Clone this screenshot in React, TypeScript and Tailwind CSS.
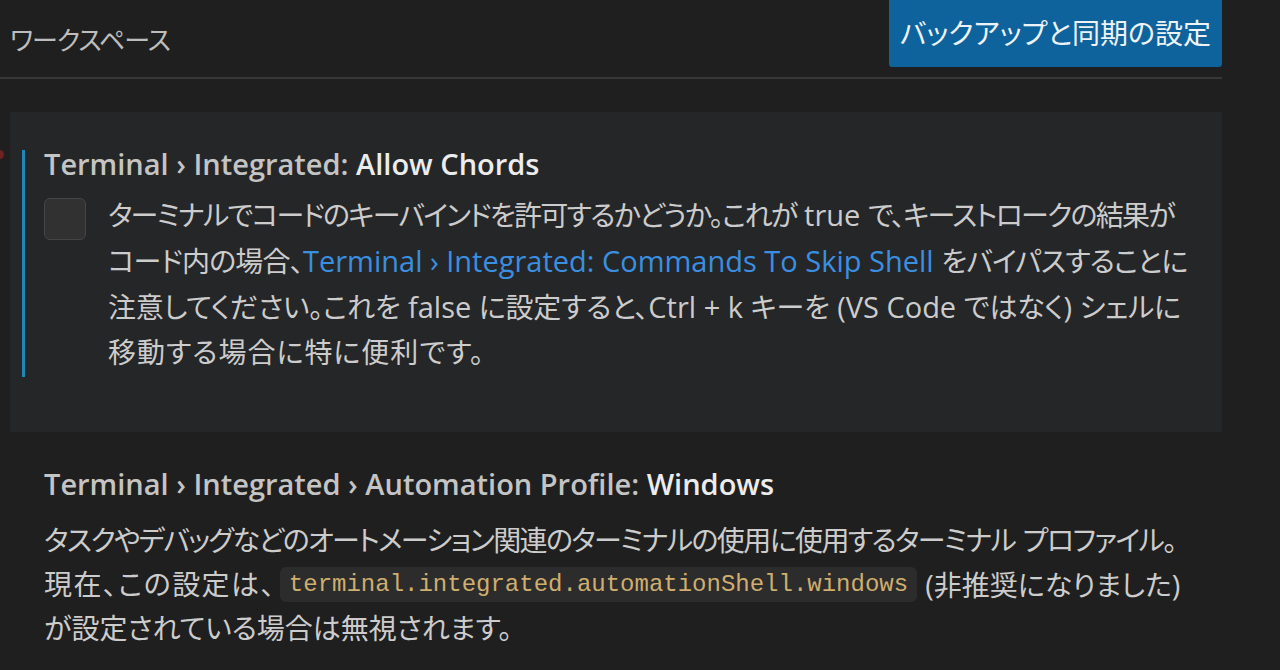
const jp = "font-['Segoe_UI','Open_Sans','Noto_Sans_CJK_JP',sans-serif] [font-feature-settings:'palt']";

function L({ children }: { children: React.ReactNode }) {
  // latin runs are a touch bigger than the CJK text in the original
  return <span className="text-[29px] tracking-normal">{children}</span>;
}

export default function App() {
  return (
    <div className={`w-[1280px] h-[670px] overflow-hidden bg-[#1f1f1f] text-[#cccccc] ${jp}`}>
      <div className="w-[1222px] h-[79px] flex items-start justify-between border-b-2 border-[#383838]">
        <div className="pl-[10px] pt-[22px] text-[26px] leading-[36px] tracking-[-1px] text-[#bdbdbd]">ワークスペース</div>
        <button className="h-[67px] px-[11px] bg-[#0e639c] rounded-b-[3px] text-[28px] text-[#eef3f8] leading-[67px]">
          バックアップと同期の設定
        </button>
      </div>

      <div className="mt-[33px] flex">
        <div className="w-[10px] shrink-0">
          <div className="mt-[38px] -ml-[5px] w-[9px] h-[9px] rounded-full bg-[#6e2222]" />
        </div>
        <div className="w-[1212px] h-[320px] bg-[#252628] pt-[38px] pl-[12px]">
          <div className="h-[227px] border-l-[3px] border-[#1d87b5] pl-[19px]">
            <div className="text-[29px] leading-[28px] font-semibold whitespace-nowrap">
              <span className="text-[#c4c4c4]">Terminal › Integrated: </span>
              <span className="text-[#ececec]">Allow Chords</span>
            </div>
            <div className="mt-[14px] flex items-start gap-[22px]">
              <div className="mt-[6px] w-[42px] h-[42px] shrink-0 rounded-[6px] bg-[#313131] border border-[#454545]" />
              <div className="text-[28px] leading-[45px] whitespace-nowrap">
                <div className="tracking-[-1.7px]">
                  ターミナルでコードのキーバインドを許可するかどうか。これが<L> true </L>で、キーストロークの結果が
                </div>
                <div className="tracking-[-0.8px]">
                  コード内の場合、
                  <span className="text-[29px] tracking-normal text-[#3b8fe0]">Terminal › Integrated: Commands To Skip Shell</span>
                  <L> </L>をバイパスすることに
                </div>
                <div className="tracking-[-0.2px]">
                  注意してください。これを<L> false </L>に設定すると、<L>Ctrl + k </L>キーを<L> (VS Code </L>ではなく<L>) </L>シェルに
                </div>
                <div className="tracking-[1px]">移動する場合に特に便利です。</div>
              </div>
            </div>
          </div>
        </div>
      </div>

      <div className="pt-[38px] pl-[44px]">
        <div className="text-[29px] leading-[28px] font-semibold whitespace-nowrap">
          <span className="text-[#c4c4c4]">Terminal › Integrated › Automation Profile: </span>
          <span className="text-[#ececec]">Windows</span>
        </div>
        <div className="mt-[20px] text-[28px] leading-[43.5px] whitespace-nowrap">
          <div className="tracking-[-1.6px]">
            タスクやデバッグなどのオートメーション関連のターミナルの使用に使用するターミナル<L> </L>プロファイル。
          </div>
          <div className="flex items-center">
            <span className="tracking-[1.4px]">現在、この設定は、</span>
            <code className="ml-[4px] px-[9px] h-[35px] leading-[35px] rounded-[6px] bg-[#2c2c2c] text-[#cfae6f] font-['Liberation_Mono',monospace] text-[24px]">
              terminal.integrated.automationShell.windows
            </code>
            <span className="ml-[8px]">
              <L>(</L>非推奨になりました<L>)</L>
            </span>
          </div>
          <div>が設定されている場合は無視されます。</div>
        </div>
      </div>
    </div>
  );
}
